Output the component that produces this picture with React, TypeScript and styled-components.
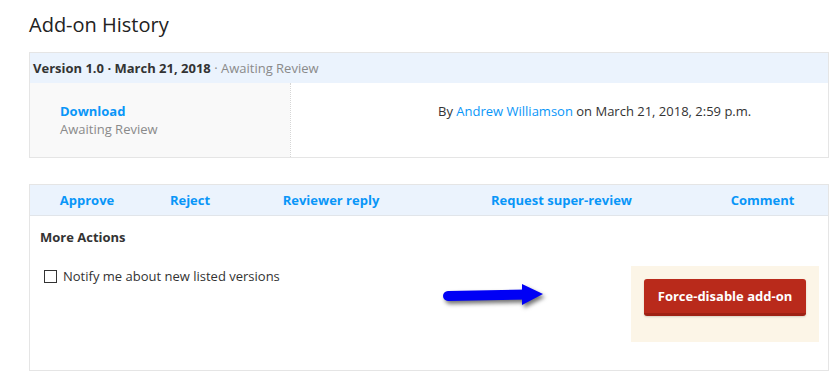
import styled, { createGlobalStyle } from 'styled-components'

const GlobalStyle = createGlobalStyle`
  body {
    margin: 0;
    background: #fff;
    font-family: 'Open Sans', 'Liberation Sans', sans-serif;
    font-size: 13px;
    color: #333;
  }
`

const actions = [
  { label: 'Approve', width: '114px' },
  { label: 'Reject', width: '92px' },
  { label: 'Reviewer reply', width: '190px' },
  { label: 'Request super-review', width: '271px' },
  { label: 'Comment', width: '1fr' },
]

const BlueArrow = () => (
  <ArrowSvg viewBox="0 0 110 32" width="110" height="32">
    <line x1="9" y1="16" x2="88" y2="14.5" stroke="#0000f5" strokeWidth="10" strokeLinecap="round" />
    <polygon points="83,4 104,14 83,25" fill="#0000f5" />
  </ArrowSvg>
)

const App = () => {
  return (
    <Page>
      <GlobalStyle />
      <Title>Add-on History</Title>

      <HistoryTable>
        <VersionHeader>
          <strong>Version 1.0 · March 21, 2018</strong>
          <Muted> · Awaiting Review</Muted>
        </VersionHeader>
        <HistoryBody>
          <FileCell>
            <BoldLink href="#">Download</BoldLink>
            <Muted>Awaiting Review</Muted>
          </FileCell>
          <CommentCell>
            By <PlainLink href="#">Andrew Williamson</PlainLink> on March 21, 2018, 2:59 p.m.
          </CommentCell>
        </HistoryBody>
      </HistoryTable>

      <ReviewTable>
        <ActionBar $columns={actions.map((a) => a.width).join(' ')}>
          {actions.map((a) => (
            <ActionLink key={a.label} href="#">
              {a.label}
            </ActionLink>
          ))}
        </ActionBar>
        <ReviewBody>
          <SectionTitle>More Actions</SectionTitle>
          <ActionsRow>
            <CheckLabel>
              <Checkbox type="checkbox" />
              Notify me about new listed versions
            </CheckLabel>
            <BlueArrow />
            <DangerZone>
              <DangerButton type="button">Force-disable add-on</DangerButton>
            </DangerZone>
          </ActionsRow>
        </ReviewBody>
      </ReviewTable>
    </Page>
  )
}

const Page = styled.div`
  padding: 0 5px 20px 29px;
`

const Title = styled.h2`
  margin: 11px 0 14px;
  font-size: 20px;
  font-weight: 400;
  line-height: 27px;
  color: #222;
`

const HistoryTable = styled.div`
  border: 1px solid #e5e5e5;
`

const VersionHeader = styled.div`
  background: #ebf3fd;
  padding: 6px 3px;
  line-height: 18px;
  color: #333;

  strong {
    font-weight: 700;
  }
`

const Muted = styled.span`
  color: #8a8a8a;
`

const HistoryBody = styled.div`
  display: grid;
  grid-template-columns: 260px 1fr;
`

const FileCell = styled.div`
  display: flex;
  flex-direction: column;
  background: #f9f9f9;
  padding: 19px 30px 19px;
  line-height: 18px;
`

const BoldLink = styled.a`
  color: #0996f8;
  font-weight: 700;
  text-decoration: none;
`

const PlainLink = styled.a`
  color: #0996f8;
  text-decoration: none;
`

const CommentCell = styled.div`
  border-left: 1px dotted #d6d6d6;
  padding: 19px 0 0 147px;
  line-height: 18px;
  color: #333;
`

const ReviewTable = styled.div`
  margin-top: 26px;
  border: 1px solid #e5e5e5;
`

const ActionBar = styled.div<{ $columns: string }>`
  display: grid;
  grid-template-columns: ${(p) => p.$columns};
  background: #ebf3fd;
  border-bottom: 1px solid #e1e5ea;
  height: 30px;
  align-items: center;
`

const ActionLink = styled.a`
  text-align: center;
  color: #0996f8;
  font-weight: 700;
  text-decoration: none;
  line-height: 18px;
`

const ReviewBody = styled.div`
  padding: 12px 9px 28px 10px;
`

const SectionTitle = styled.h4`
  margin: 0;
  font-size: 13px;
  font-weight: 700;
  line-height: 18px;
  color: #333;
`

const ActionsRow = styled.div`
  display: grid;
  grid-template-columns: 1fr auto auto;
  align-items: start;
  margin-top: 20px;
`

const CheckLabel = styled.label`
  display: flex;
  align-items: center;
  gap: 6px;
  margin: 1px 0 0 4px;
  line-height: 18px;
  color: #333;
`

const Checkbox = styled.input`
  appearance: none;
  width: 13px;
  height: 13px;
  margin: 0;
  border: 1px solid #333;
  border-radius: 0;
  background: #fff;
`

const ArrowSvg = styled.svg`
  margin: 14px 82px 0 0;
  filter: drop-shadow(2px 3px 2px rgba(0, 0, 0, 0.55));
`

const DangerZone = styled.div`
  background: #fcf5e7;
  padding: 13px 13px 26px;
`

const DangerButton = styled.button`
  width: 162px;
  height: 37px;
  border: none;
  border-bottom: 3px solid #9f2114;
  border-radius: 3px;
  background: #b92a1b;
  color: #fff;
  font-family: 'Open Sans', 'Liberation Sans', sans-serif;
  font-size: 13px;
  font-weight: 700;
  box-shadow: 0 1px 2px rgba(0, 0, 0, 0.15);
  cursor: pointer;
`

export default App
